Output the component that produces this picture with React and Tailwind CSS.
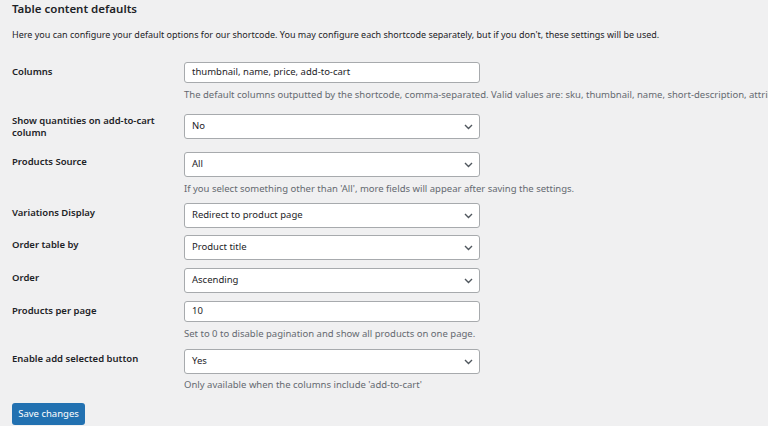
import React from "react";

const rows = [
  { label: "Columns", type: "input", value: "thumbnail, name, price, add-to-cart", desc: "The default columns outputted by the shortcode, comma-separated. Valid values are: sku, thumbnail, name, short-description, attributes", mb: "mb-[13px]" },
  { label: "Show quantities on add-to-cart column", type: "select", value: "No", mb: "mb-[13px]", lpt: "pt-px" },
  { label: "Products Source", type: "select", value: "All", desc: "If you select something other than 'All', more fields will appear after saving the settings.", mb: "mb-[8px]" },
  { label: "Variations Display", type: "select", value: "Redirect to product page", mb: "mb-[7px]" },
  { label: "Order table by", type: "select", value: "Product title", mb: "mb-[8px]" },
  { label: "Order", type: "select", value: "Ascending", mb: "mb-[8px]" },
  { label: "Products per page", type: "input", value: "10", desc: "Set to 0 to disable pagination and show all products on one page.", mb: "mb-[9px]" },
  { label: "Enable add selected button", type: "select", value: "Yes", desc: "Only available when the columns include 'add-to-cart'", mb: "mb-[8px]", dmt: "mt-[5px]" },
];

function Chevron() {
  return (
    <svg width="9" height="6" viewBox="0 0 9 6" fill="none" className="text-[#50575e]">
      <path d="M1 1l3.5 3.5L8 1" stroke="currentColor" strokeWidth="1.4" />
    </svg>
  );
}

export default function App() {
  return (
    <div
      className="w-[768px] h-[426px] overflow-hidden bg-[#f0f0f1] text-[#1d2327] px-3 pt-[1px]"
      style={{ fontFamily: '"Noto Sans", "Liberation Sans", sans-serif' }}
    >
      <h2 className="text-[11.5px] font-semibold leading-[16px]">Table content defaults</h2>
      <p className="mt-[12px] text-[9px] leading-[12px] whitespace-nowrap">
        Here you can configure your default options for our shortcode. You may configure each shortcode separately, but if you don't, these settings will be used.
      </p>

      <div className="mt-[21px] flex flex-col">
        {rows.map((r) => (
          <div key={r.label} className={`flex ${r.mb}`}>
            <div className={`w-[172px] shrink-0 pr-4 text-[9.5px] font-semibold leading-[12px] ${r.lpt || "pt-[4px]"}`}>
              {r.label}
            </div>
            <div className="flex flex-col">
              {r.type === "input" ? (
                <div className="w-[296px] h-[21px] flex items-center px-[7px] bg-white border border-[#a7aaad] rounded-[3px] text-[9.5px]">
                  {r.value}
                </div>
              ) : (
                <div className="w-[296px] h-[25px] flex items-center justify-between pl-[7px] pr-[6px] bg-white border border-[#a7aaad] rounded-[3px] text-[9.5px]">
                  <span>{r.value}</span>
                  <Chevron />
                </div>
              )}
              {r.desc && (
                <p className={`${r.dmt || "mt-[6px]"} text-[9.5px] leading-[12px] text-[#646970] whitespace-nowrap`}>{r.desc}</p>
              )}
            </div>
          </div>
        ))}
      </div>

      <button className="h-[22px] w-[73px] rounded-[3px] bg-[#2271b1] text-white text-[9.5px] leading-none">
        Save changes
      </button>
    </div>
  );
}
